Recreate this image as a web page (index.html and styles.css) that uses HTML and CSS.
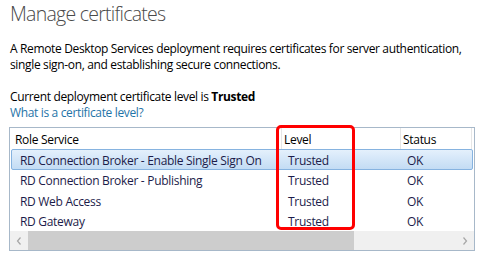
FILE: index.html
```html
<!DOCTYPE html>
<html>
<head>
<meta charset="utf-8">
<link rel="stylesheet" href="styles.css">
</head>
<body>
<div class="page">
  <h1 class="title">Manage certificates</h1>
  <p class="desc">A Remote Desktop Services deployment requires certificates for server authentication, single sign-on, and establishing secure connections.</p>
  <p class="level">Current deployment certificate level is <b>Trusted</b></p>
  <a class="link" href="#">What is a certificate level?</a>
  <div class="listbox">
    <div class="row header">
      <div class="c1">Role Service</div>
      <div class="c2">Level</div>
      <div class="c3">Status</div>
    </div>
    <div class="row item selected">
      <div class="c1">RD Connection Broker - Enable Single Sign On</div>
      <div class="c2">Trusted</div>
      <div class="c3">OK</div>
    </div>
    <div class="row item">
      <div class="c1">RD Connection Broker - Publishing</div>
      <div class="c2">Trusted</div>
      <div class="c3">OK</div>
    </div>
    <div class="row item tall">
      <div class="c1">RD Web Access</div>
      <div class="c2">Trusted</div>
      <div class="c3">OK</div>
    </div>
    <div class="row item">
      <div class="c1">RD Gateway</div>
      <div class="c2">Trusted</div>
      <div class="c3">OK</div>
    </div>
    <div class="hscroll">
      <div class="arrow">
        <svg width="8" height="10" viewBox="0 0 8 10"><path d="M5.5 1.5 L2.5 5 L5.5 8.5" fill="none" stroke="#a6a6a6" stroke-width="1.2"/></svg>
      </div>
      <div class="thumb"></div>
      <div class="track"></div>
      <div class="arrow">
        <svg width="8" height="10" viewBox="0 0 8 10"><path d="M2.5 1.5 L5.5 5 L2.5 8.5" fill="none" stroke="#a6a6a6" stroke-width="1.2"/></svg>
      </div>
    </div>
    <div class="highlight"></div>
  </div>
</div>
</body>
</html>
```

FILE: styles.css
```css
html, body {
  margin: 0;
  padding: 0;
  background: #ffffff;
}
.page {
  padding: 0 8px 0 10px;
  font-family: "Open Sans", "Noto Sans", sans-serif;
  font-size: 12px;
  color: #000;
}
.title {
  margin: 0;
  font-weight: 300;
  font-size: 19.5px;
  line-height: 27px;
  color: #4a4a4a;
  letter-spacing: -0.75px;
}
.desc {
  margin: 14px 0 0 0;
  line-height: 16px;
  width: 470px;
  letter-spacing: -0.35px;
}
.level {
  margin: 16px 0 0 0;
  line-height: 16px;
  letter-spacing: -0.35px;
}
.level b {
  font-weight: 700;
}
.link {
  display: block;
  line-height: 16px;
  color: #1f74a8;
  text-decoration: none;
  letter-spacing: -0.35px;
}
.listbox {
  position: relative;
  margin: 6px 0 0 -1px;
  width: 464px;
  border: 1px solid #a7b8c9;
  background: #fff;
}
.row {
  display: grid;
  grid-template-columns: 271px 119px 1fr;
  height: 20px;
  line-height: 20px;
  white-space: nowrap;
  letter-spacing: -0.3px;
}
.row > div {
  overflow: hidden;
  padding-top: 1px;
}
.header {
  color: #000;
  height: 21px;
  line-height: 21px;
}
.header .c1 { padding-left: 5px; }
.header .c2 { padding-left: 2px; border-left: 1px solid #e6e6e6; }
.header .c3 { padding-left: 2px; border-left: 1px solid #e6e6e6; border-right: 1px solid #e6e6e6; margin-right: 2px; }
.item {
  color: #1c1c4a;
  margin: 0 1px;
}
.item .c1 { padding-left: 9px; }
.item .c2 { padding-left: 6px; }
.item .c3 { padding-left: 6px; }
.tall {
  height: 21px;
  line-height: 21px;
}
.selected {
  height: 19px;
  line-height: 19px;
  border: 1px solid #86b3e0;
  border-radius: 2px;
  background: linear-gradient(#e4f0fc, #c3dcf4);
  grid-template-columns: 270px 119px 1fr;
}
.selected .c1 { padding-left: 8px; }
.hscroll {
  display: flex;
  height: 19px;
  background: #f0f0f0;
}
.arrow {
  width: 18px;
  display: flex;
  align-items: center;
  justify-content: center;
}
.thumb {
  width: 326px;
  background: #cdcdcd;
}
.track {
  flex: 1;
}
.highlight {
  position: absolute;
  left: 266px;
  top: -3px;
  width: 73px;
  height: 99px;
  border: 3px solid #ff0000;
  border-radius: 5px;
}
```
